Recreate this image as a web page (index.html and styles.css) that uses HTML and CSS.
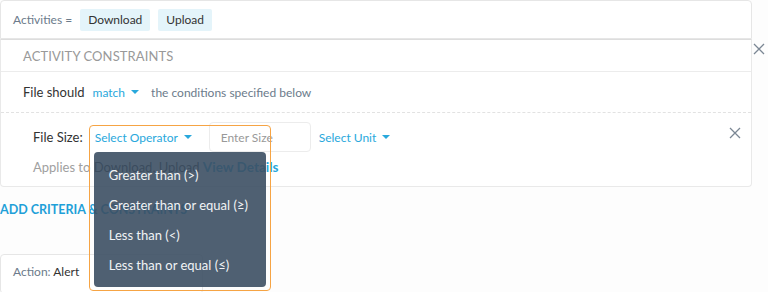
FILE: index.html
```html
<!DOCTYPE html>
<html lang="en">
<head>
    <meta charset="UTF-8">
    <meta name="viewport" content="width=device-width, initial-scale=1.0">
    <title>Activity Constraints</title>
    <link rel="stylesheet" href="styles.css">
</head>
<body>
    <div class="page">
        <div class="activities">
            <span class="label">Activities =</span>
            <span class="chip">Download</span>
            <span class="chip">Upload</span>
        </div>

        <div class="constraints">
            <span class="close close-top">
                <svg width="12" height="12" viewBox="0 0 12 12"><path d="M1 1 L11 11 M11 1 L1 11" stroke="#7b8794" stroke-width="1.3" fill="none"/></svg>
            </span>
            <div class="panel-head">ACTIVITY CONSTRAINTS</div>

            <div class="should-row">
                <span class="strong">File should</span>
                <span class="link">match <i class="caret"></i></span>
                <span class="muted">the conditions specified below</span>
            </div>

            <div class="size-row">
                <span class="strong">File Size:</span>
                <div class="select-wrap">
                    <span class="link">Select Operator <i class="caret"></i></span>
                    <div class="focus-ring"></div>
                    <ul class="menu">
                        <li>Greater than (&gt;)</li>
                        <li>Greater than or equal (≥)</li>
                        <li>Less than (&lt;)</li>
                        <li>Less than or equal (≤)</li>
                    </ul>
                </div>
                <input class="size-input" type="text" placeholder="Enter Size">
                <span class="link unit">Select Unit <i class="caret"></i></span>
                <span class="close close-row">
                    <svg width="12" height="12" viewBox="0 0 12 12"><path d="M1 1 L11 11 M11 1 L1 11" stroke="#7b8794" stroke-width="1.3" fill="none"/></svg>
                </span>
            </div>

            <div class="applies-row">
                Applies to <span class="dark">Download, Upload</span> <span class="details">View Details</span>
            </div>
        </div>

        <div class="add-link">ADD CRITERIA &amp; CONSTRAINTS</div>

        <div class="action">
            <span class="muted">Action:</span> <span class="dark">Alert</span>
        </div>
    </div>
</body>
</html>
```

FILE: styles.css
```css
body {
    margin: 0;
    background-color: #fdfdfd;
    font-family: Lato, "Open Sans", sans-serif;
    font-size: 12px;
    color: #333;
}

.page {
    width: 752px;
}

.activities {
    height: 39px;
    box-sizing: border-box;
    border: 1px solid #e6e6e6;
    border-radius: 4px 4px 0 0;
    background-color: #fff;
    display: flex;
    align-items: center;
    padding-left: 12px;
}

.activities .label {
    color: #6c7b8b;
    margin-right: 8px;
}

.chip {
    background-color: #e4f4fa;
    color: #333;
    border-radius: 2px;
    padding: 3px 8px;
    line-height: 16px;
    margin-right: 8px;
}

.constraints {
    position: relative;
    border: 1px solid #e9e9e9;
    border-top: 1px solid #ddd;
    border-radius: 0 0 4px 4px;
    background-color: #fff;
}

.close {
    position: absolute;
    display: flex;
}

.close-top {
    right: -14px;
    top: 3px;
}

.close-row {
    right: 10px;
    top: 87px;
}

.panel-head {
    height: 31px;
    display: flex;
    align-items: center;
    padding-left: 22px;
    font-size: 13px;
    color: #999;
    border-bottom: 1px solid #ececec;
    letter-spacing: 0.1px;
}

.should-row {
    height: 40px;
    display: flex;
    align-items: center;
    padding-left: 22px;
    border-bottom: 1px dashed #e2e2e2;
}

.strong {
    font-size: 13px;
    color: #333;
}

.link {
    color: #29a8dc;
    white-space: nowrap;
}

.caret {
    display: inline-block;
    width: 0;
    height: 0;
    border-left: 4px solid transparent;
    border-right: 4px solid transparent;
    border-top: 4px solid #29a8dc;
    vertical-align: middle;
    margin-left: 3px;
    margin-bottom: 2px;
}

.should-row .link {
    margin-left: 8px;
}

.muted {
    color: #6c7b8b;
}

.should-row .muted {
    margin-left: 12px;
}

.size-row {
    display: flex;
    align-items: center;
    padding: 9px 0 0 32px;
}

.select-wrap {
    position: relative;
    margin-left: 12px;
    width: 114px;
}

.focus-ring {
    position: absolute;
    left: -6px;
    top: -5px;
    width: 180px;
    height: 164px;
    border: 1.5px solid #f6a444;
    border-radius: 4px;
    z-index: 3;
    pointer-events: none;
}

.menu {
    position: absolute;
    left: -1px;
    top: 22px;
    width: 172px;
    height: 135px;
    box-sizing: border-box;
    margin: 0;
    padding: 8px 0 0;
    list-style: none;
    background-color: rgba(60, 79, 99, 0.9);
    border-radius: 4px;
    z-index: 2;
}

.menu li {
    height: 30px;
    line-height: 30px;
    padding-left: 15px;
    color: #f1f3f5;
    font-size: 13px;
}

.size-input {
    width: 102px;
    height: 30px;
    box-sizing: border-box;
    border: 1px solid #ececec;
    border-radius: 4px;
    padding: 0 11px;
    font-family: Lato, sans-serif;
    font-size: 12px;
    background-color: #fff;
}

.size-input::placeholder {
    color: #999;
}

.unit {
    margin-left: 8px;
}

.applies-row {
    padding: 7px 0 10px 32px;
    line-height: 17px;
    font-size: 13px;
    color: #a0a0a0;
}

.dark {
    color: #333;
}

.details {
    color: #29a8dc;
    font-weight: bold;
    font-size: 13.5px;
}

.add-link {
    margin-top: 15px;
    color: #1fa0d8;
    font-weight: bold;
    font-size: 12.5px;
}

.action {
    margin-top: 37px;
    width: 203px;
    height: 40px;
    box-sizing: border-box;
    border: 1px solid #e6e6e6;
    border-radius: 4px;
    padding: 9px 12px;
    background-color: #fff;
}
```
